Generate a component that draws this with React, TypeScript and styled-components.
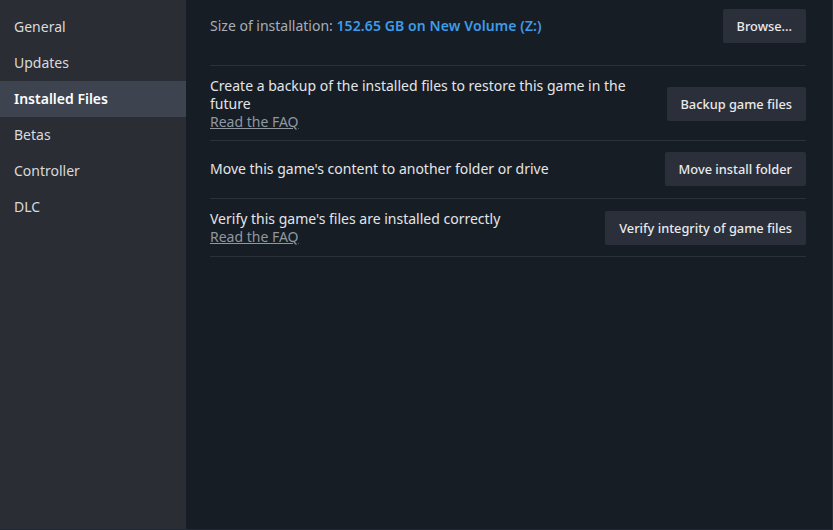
import React from 'react';
import styled, { createGlobalStyle } from 'styled-components';

const GlobalStyle = createGlobalStyle`
  html, body {
    margin: 0;
    padding: 0;
    background: #171d25;
  }
  * {
    box-sizing: border-box;
  }
`;

const Page = styled.div`
  display: flex;
  width: 833px;
  height: 530px;
  font-family: 'Noto Sans', 'Liberation Sans', Arial, sans-serif;
  font-size: 14px;
  background: #171d25;
  border-right: 1px solid #2a3039;
  border-bottom: 1px solid #222831;
  overflow: hidden;
`;

const Sidebar = styled.nav`
  width: 186px;
  flex-shrink: 0;
  background: #2a2d34;
  padding-top: 9px;
  display: flex;
  flex-direction: column;
`;

const NavItem = styled.div<{ $active?: boolean }>`
  height: 36px;
  display: flex;
  align-items: center;
  padding-left: 14px;
  padding-bottom: 1px;
  font-size: 14px;
  color: ${(p) => (p.$active ? '#ffffff' : '#d8dadd')};
  font-weight: ${(p) => (p.$active ? 600 : 400)};
  background: ${(p) => (p.$active ? '#3d4450' : 'transparent')};
`;

const Main = styled.main`
  flex: 1;
  padding: 9px 26px 0 24px;
`;

const Row = styled.div<{ $pad: string }>`
  display: flex;
  align-items: center;
  justify-content: space-between;
  gap: 24px;
  padding: ${(p) => p.$pad};
  border-bottom: 1px solid #2a313b;
`;

const Text = styled.div`
  color: #e3e5e8;
  line-height: 18px;
  max-width: 430px;
`;

const Label = styled.span`
  color: #a8aeb6;
`;

const Value = styled.span`
  color: #3d9be9;
  font-weight: 600;
  letter-spacing: 0.1px;
`;

const Faq = styled.a`
  display: block;
  color: #8f98a0;
  text-decoration: underline;
  cursor: pointer;
`;

const Button = styled.button`
  height: 34px;
  padding: 0 14px;
  border: none;
  border-radius: 2px;
  background: #2b2f39;
  color: #e8eaed;
  font-family: inherit;
  font-size: 12.8px;
  font-weight: 500;
  white-space: nowrap;
  flex-shrink: 0;
  cursor: pointer;
`;

const tabs = ['General', 'Updates', 'Installed Files', 'Betas', 'Controller', 'DLC'];

const App = () => {
  return (
    <>
      <GlobalStyle />
      <Page>
        <Sidebar>
          {tabs.map((t) => (
            <NavItem key={t} $active={t === 'Installed Files'}>
              {t}
            </NavItem>
          ))}
        </Sidebar>
        <Main>
          <Row $pad="0 0 22px">
            <Text>
              <Label>Size of installation: </Label>
              <Value>152.65 GB on New Volume (Z:)</Value>
            </Text>
            <Button>Browse...</Button>
          </Row>
          <Row $pad="11px 0 9px">
            <Text>
              Create a backup of the installed files to restore this game in the future
              <Faq>Read the FAQ</Faq>
            </Text>
            <Button>Backup game files</Button>
          </Row>
          <Row $pad="11px 0 12px">
            <Text>Move this game's content to another folder or drive</Text>
            <Button>Move install folder</Button>
          </Row>
          <Row $pad="11px 0 10px">
            <Text>
              Verify this game's files are installed correctly
              <Faq>Read the FAQ</Faq>
            </Text>
            <Button>Verify integrity of game files</Button>
          </Row>
        </Main>
      </Page>
    </>
  );
};

export default App;
